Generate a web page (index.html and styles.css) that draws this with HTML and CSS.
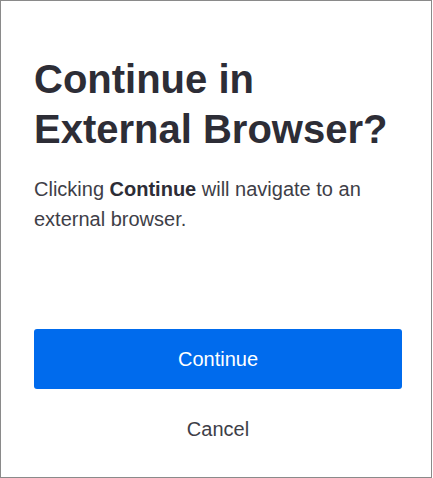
FILE: index.html
```html
<!DOCTYPE html>
<html lang="en">
<head>
<meta charset="utf-8">
<title>Continue in External Browser?</title>
<link rel="stylesheet" href="styles.css">
</head>
<body>
<div class="dialog">
  <h1 class="title">Continue in<br>External Browser?</h1>
  <p class="message">Clicking <strong>Continue</strong> will navigate to an external browser.</p>
  <div class="actions">
    <button class="btn-primary" type="button">Continue</button>
    <button class="btn-link" type="button">Cancel</button>
  </div>
</div>
</body>
</html>
```
FILE: styles.css
```css
html, body {
  margin: 0;
  padding: 0;
  background: #ffffff;
}
.dialog {
  box-sizing: border-box;
  width: 432px;
  height: 478px;
  border: 1px solid #8a8a8a;
  padding: 53px 29px 0 33px;
  font-family: "Liberation Sans", Arial, sans-serif;
}
.title {
  margin: 0;
  font-size: 40px;
  line-height: 50px;
  font-weight: 700;
  color: #2d2d36;
}
.message {
  margin: 20px 0 0;
  font-size: 20px;
  line-height: 30px;
  color: #3e3e47;
}
.message strong {
  color: #2d2d36;
}
.actions {
  margin-top: 95px;
  display: flex;
  flex-direction: column;
}
.btn-primary {
  height: 60px;
  border: none;
  border-radius: 3px;
  background: #006bed;
  color: #ffffff;
  font-family: inherit;
  font-size: 20px;
  padding: 0;
}
.btn-link {
  margin-top: 20px;
  height: 40px;
  border: none;
  background: transparent;
  color: #3e3e47;
  font-family: inherit;
  font-size: 20px;
  padding: 0;
}
```
